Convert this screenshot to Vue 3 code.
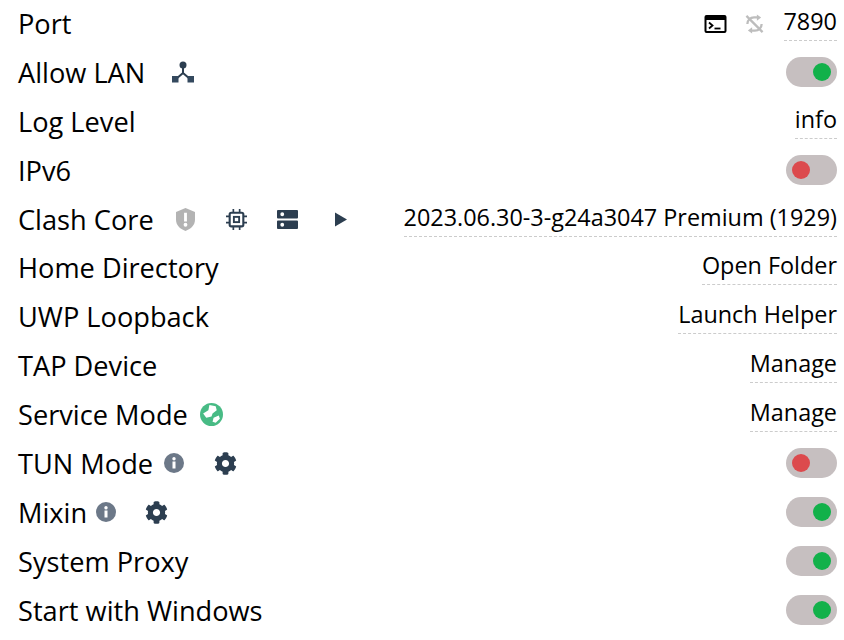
<template>
  <div class="settings">
    <div class="row">
      <div class="label">Port</div>
      <div class="right">
        <svg class="ic-term" viewBox="0 0 22 18"><path fill-rule="evenodd" d="M2 0h18a2 2 0 0 1 2 2v14a2 2 0 0 1-2 2H2a2 2 0 0 1-2-2V2a2 2 0 0 1 2-2zm0 5v11h18V5z" fill="#000"/><path d="M4.500 7.500 8 10.500 4.500 13.500" fill="none" stroke="#000" stroke-width="1.800"/><path d="M10 13.500h6" stroke="#000" stroke-width="1.800"/></svg>
        <svg class="ic-sync" viewBox="0 0 20 20" fill="none" stroke="#bdbdbd"><path d="M2.500 10c0-4 3-7 7-7h5" stroke-width="2.400"/><path d="M12.500 0 17 3.200 12.500 6.500z" fill="#bdbdbd" stroke="none"/><path d="M17.500 10c0 4-3 7-7 7h-5" stroke-width="2.400"/><path d="M7.500 13.500 3 16.800 7.500 20z" fill="#bdbdbd" stroke="none"/><path d="M1.500 1.500 18.500 18.500" stroke-width="2.400"/></svg>
        <span class="val">7890</span>
      </div>
    </div>

    <div class="row">
      <div class="label">Allow LAN
        <svg class="ic-net" viewBox="0 0 22 22"><circle cx="11" cy="4" r="3.500" fill="#2c3e50"/><path d="M11 6v6L4 18M11 12l7 6" fill="none" stroke="#2c3e50" stroke-width="2"/><rect x="0" y="15" width="6.500" height="6.500" fill="#34495e"/><rect x="15.500" y="15" width="6.500" height="6.500" fill="#34495e"/></svg>
      </div>
      <div class="switch on"><i></i></div>
    </div>

    <div class="row">
      <div class="label">Log Level</div>
      <span class="val">info</span>
    </div>

    <div class="row">
      <div class="label">IPv6</div>
      <div class="switch"><i></i></div>
    </div>

    <div class="row">
      <div class="label">Clash Core
        <svg class="ic-shield" viewBox="0 0 20 24"><path fill-rule="evenodd" d="M10 0 20 4v8c0 6-4 10-10 12C4 22 0 18 0 12V4zM8.500 5v9h3V5zM10 15.500a2 2 0 1 0 0 4 2 2 0 0 0 0-4z" fill="#b3b3b3"/></svg>
        <svg class="ic-chip" viewBox="0 0 20 20" fill="none" stroke="#2c3e50"><rect x="3.500" y="3.500" width="13" height="13" rx="1.500" stroke-width="2"/><rect x="7.500" y="7.500" width="5" height="5" stroke-width="1.800"/><path d="M7 0v3M13 0v3M7 17v3M13 17v3M0 7h3M0 13h3M17 7h3M17 13h3" stroke-width="1.600"/></svg>
        <svg class="ic-server" viewBox="0 0 22 20"><path fill-rule="evenodd" d="M1 0h20a1 1 0 0 1 1 1v7a1 1 0 0 1-1 1H1a1 1 0 0 1-1-1V1a1 1 0 0 1 1-1zm4.500 2.500a2 2 0 1 0 0 4 2 2 0 0 0 0-4zM1 11h20a1 1 0 0 1 1 1v7a1 1 0 0 1-1 1H1a1 1 0 0 1-1-1v-7a1 1 0 0 1 1-1zm4.500 2.500a2 2 0 1 0 0 4 2 2 0 0 0 0-4z" fill="#2c3e50"/></svg>
        <svg class="ic-play" viewBox="0 0 12 14"><path d="M0 0 12 7 0 14z" fill="#2c3e50"/></svg>
      </div>
      <span class="val">2023.06.30-3-g24a3047 Premium (1929)</span>
    </div>

    <div class="row">
      <div class="label">Home Directory</div>
      <span class="val">Open Folder</span>
    </div>

    <div class="row">
      <div class="label">UWP Loopback</div>
      <span class="val">Launch Helper</span>
    </div>

    <div class="row">
      <div class="label">TAP Device</div>
      <span class="val">Manage</span>
    </div>

    <div class="row">
      <div class="label">Service Mode
        <svg class="ic-globe" viewBox="0 0 22 22"><circle cx="11" cy="11" r="11" fill="#48bb85"/><path d="M3 10 8 7l1-5 6 1 1 4-4 3-1 3-5 1zM13 14l5-2 1 3-4 4-3-1z" fill="#fff"/></svg>
      </div>
      <span class="val">Manage</span>
    </div>

    <div class="row">
      <div class="label">TUN Mode
        <svg class="ic-info" viewBox="0 0 20 20"><circle cx="10" cy="10" r="10" fill="#6c7888"/><rect x="8.500" y="8.500" width="3" height="7" fill="#fff"/><circle cx="10" cy="5.800" r="1.700" fill="#fff"/></svg>
        <svg class="ic-cog" viewBox="0 0 512 512"><path :d="cog" fill="#2c3e50"/></svg>
      </div>
      <div class="switch"><i></i></div>
    </div>

    <div class="row">
      <div class="label mixin">Mixin
        <svg class="ic-info" viewBox="0 0 20 20"><circle cx="10" cy="10" r="10" fill="#6c7888"/><rect x="8.500" y="8.500" width="3" height="7" fill="#fff"/><circle cx="10" cy="5.800" r="1.700" fill="#fff"/></svg>
        <svg class="ic-cog" viewBox="0 0 512 512"><path :d="cog" fill="#2c3e50"/></svg>
      </div>
      <div class="switch on"><i></i></div>
    </div>

    <div class="row">
      <div class="label">System Proxy</div>
      <div class="switch on"><i></i></div>
    </div>

    <div class="row">
      <div class="label">Start with Windows</div>
      <div class="switch on"><i></i></div>
    </div>
  </div>
</template>

<script setup>
const cog = "M487.4 315.7l-42.6-24.6c4.3-23.2 4.3-47 0-70.2l42.6-24.6c4.9-2.8 7.1-8.6 5.5-14-11.1-35.6-30-67.8-54.7-94.6-3.8-4.1-10-5.1-14.8-2.3L380.8 110c-17.9-15.4-38.5-27.3-60.8-35.1V25.800c0-5.600-3.900-10.500-9.400-11.700-36.700-8.200-74.300-7.800-109.200 0-5.500 1.200-9.400 6.100-9.400 11.700V75c-22.200 7.900-42.800 19.800-60.800 35.100L88.700 85.500c-4.900-2.800-11-1.900-14.800 2.300-24.700 26.700-43.600 58.900-54.700 94.600-1.700 5.400.6 11.200 5.500 14L67.300 221c-4.300 23.200-4.300 47 0 70.200l-42.600 24.600c-4.900 2.800-7.100 8.600-5.500 14 11.100 35.600 30 67.800 54.700 94.600 3.800 4.100 10 5.100 14.800 2.300l42.600-24.600c17.900 15.400 38.500 27.300 60.800 35.100v49.200c0 5.600 3.900 10.500 9.400 11.700 36.700 8.200 74.300 7.800 109.200 0 5.500-1.200 9.400-6.100 9.400-11.700v-49.200c22.200-7.900 42.800-19.800 60.800-35.100l42.600 24.600c4.900 2.800 11 1.900 14.800-2.300 24.700-26.700 43.600-58.900 54.700-94.600 1.500-5.500-.7-11.300-5.600-14.100zM256 336c-44.100 0-80-35.900-80-80s35.900-80 80-80 80 35.900 80 80-35.900 80-80 80z";
</script>

<style>
html, body {
  background: #fff;
  overflow: hidden;
}
</style>

<style scoped>
.settings {
  padding-left: 18px;
  padding-right: 7px;
  font-family: "Open Sans", "Noto Sans", sans-serif;
  color: #000;
}
.row {
  height: 48.9px;
  display: flex;
  align-items: center;
  justify-content: space-between;
}
.label {
  display: flex;
  align-items: center;
  font-size: 27.2px;
  white-space: nowrap;
  margin-bottom: 2px;
}
.right {
  display: flex;
  align-items: center;
}
.val {
  font-size: 23.4px;
  line-height: 38px;
  border-bottom: 1px dashed #ccc;
  margin-bottom: 6px;
  white-space: nowrap;
}
.switch {
  width: 51px;
  height: 30px;
  border-radius: 15px;
  background: #c6bfc0;
  display: flex;
  align-items: center;
  padding: 0 6px;
  box-sizing: border-box;
  margin-bottom: 2px;
}
.switch.on {
  justify-content: flex-end;
}
.switch i {
  width: 18px;
  height: 18px;
  border-radius: 50%;
  background: #dc4a4d;
}
.switch.on i {
  background: #12b14a;
}
.ic-term { width: 23px; height: 18px; margin-bottom: 1px; }
.ic-sync { width: 19px; height: 20px; margin-left: 18px; margin-right: 20px; }
.ic-net { width: 22px; height: 22px; margin-left: 27px; }
.ic-shield { width: 19px; height: 23px; margin-left: 22px; }
.ic-chip { width: 21px; height: 21px; margin-left: 31px; }
.ic-server { width: 21px; height: 21px; margin-left: 30px; }
.ic-play { width: 12px; height: 15px; margin-left: 37px; }
.ic-globe { width: 23px; height: 23px; margin-left: 12px; }
.ic-info { width: 20px; height: 20px; margin-left: 11px; }
.ic-cog { width: 23px; height: 23px; margin-left: 30px; }
.mixin .ic-info { margin-left: 9px; }
.mixin .ic-cog { margin-left: 29px; }
</style>
